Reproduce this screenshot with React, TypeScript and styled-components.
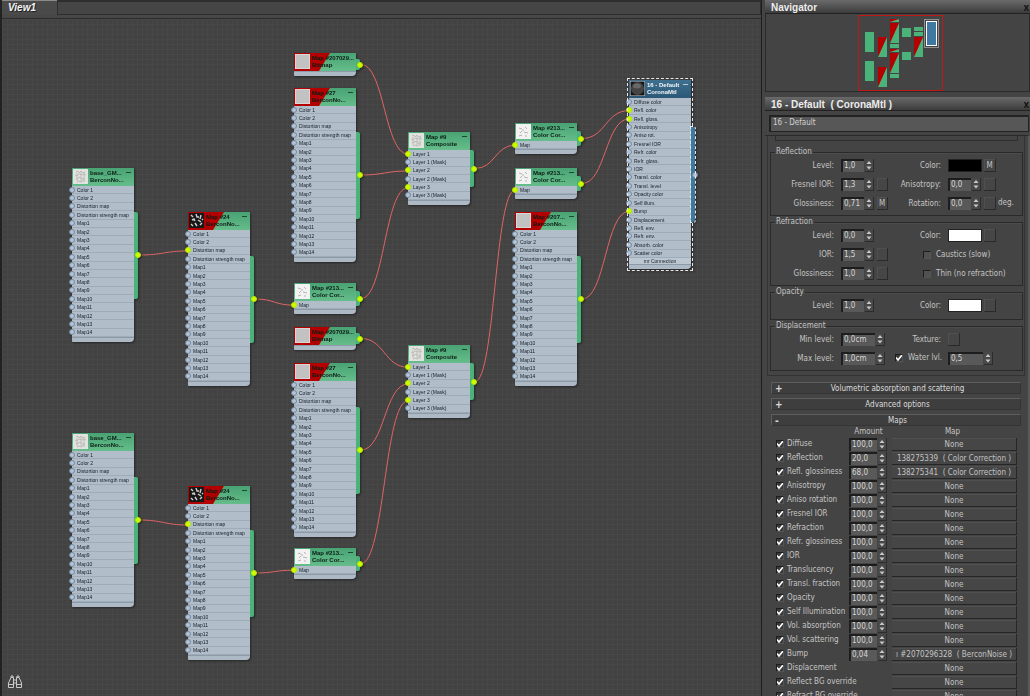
import React from "react";
import styled, { createGlobalStyle, css } from "styled-components";

const GlobalStyle = createGlobalStyle`
  * { box-sizing: border-box; }
  html, body { margin: 0; background: #444; }
  body { font-family: "DejaVu Sans Condensed", "DejaVu Sans", sans-serif; font-size: 8px; line-height: 12px; color: #c4c4c4; }
  button, input { font: inherit; color: inherit; margin: 0; }
  ul { list-style: none; margin: 0; padding: 0; }
`;

const ROW_HEIGHT = 8.4;
const NODE_WIDTH = 62;
const HEADER_HEIGHT = 18;
const FOOTER_HEIGHT = 5;

type Look = "plain" | "scratch" | "noise" | "blob" | "sphere";

interface GraphNode {
  id: string;
  x: number;
  y: number;
  title: string;
  kind: string;
  look: Look;
  flagged?: boolean;
  selected?: boolean;
  fixed?: boolean;
  slots: string[];
  used?: number[];
}

const berconSlots = [
  "Color 1", "Color 2", "Distortion map", "Distortion strength map",
  ...Array.from({ length: 14 }, (_, i) => `Map${i + 1}`),
];
const layerSlots = ["Layer 1", "Layer 1 (Mask)", "Layer 2", "Layer 2 (Mask)", "Layer 3", "Layer 3 (Mask)"];
const coronaSlots = [
  "Diffuse color", "Refl. color", "Refl. gloss.", "Anisotropy", "Aniso rot.", "Fresnel IOR", "Refr. color",
  "Refr. gloss.", "IOR", "Transl. color", "Transl. level", "Opacity color", "Self illum.", "Bump",
  "Displacement", "Refl. env.", "Refr. env.", "Absorb. color", "Scatter color",
];

const nodes: GraphNode[] = [
  { id: "base1", x: 72, y: 168, title: "base_GM...", kind: "BerconNo...", look: "noise", slots: berconSlots },
  { id: "base2", x: 72, y: 433, title: "base_GM...", kind: "BerconNo...", look: "noise", slots: berconSlots },
  { id: "m24a", x: 188, y: 212, title: "Map #24", kind: "BerconNo...", look: "blob", flagged: true, slots: berconSlots, used: [2] },
  { id: "m24b", x: 188, y: 486, title: "Map #24", kind: "BerconNo...", look: "blob", flagged: true, slots: berconSlots, used: [2] },
  { id: "bmp1", x: 294, y: 53, title: "Map #207029...", kind: "Bitmap", look: "plain", flagged: true, fixed: true, slots: [] },
  { id: "m27a", x: 294, y: 88, title: "Map #27", kind: "BerconNo...", look: "plain", flagged: true, slots: berconSlots },
  { id: "cc1", x: 294, y: 283, title: "Map #213...", kind: "Color Cor...", look: "scratch", slots: ["Map"], used: [0] },
  { id: "bmp2", x: 294, y: 327, title: "Map #207029...", kind: "Bitmap", look: "plain", flagged: true, fixed: true, slots: [] },
  { id: "m27b", x: 294, y: 363, title: "Map #27", kind: "BerconNo...", look: "plain", flagged: true, slots: berconSlots },
  { id: "cc2", x: 294, y: 548, title: "Map #213...", kind: "Color Cor...", look: "scratch", slots: ["Map"], used: [0] },
  { id: "comp1", x: 408, y: 132, title: "Map #9", kind: "Composite", look: "noise", slots: layerSlots, used: [0, 2, 4] },
  { id: "comp2", x: 408, y: 345, title: "Map #9", kind: "Composite", look: "noise", slots: layerSlots, used: [0, 2, 4] },
  { id: "cc3", x: 515, y: 123, title: "Map #213...", kind: "Color Cor...", look: "scratch", slots: ["Map"], used: [0] },
  { id: "cc4", x: 515, y: 168, title: "Map #213...", kind: "Color Cor...", look: "scratch", slots: ["Map"], used: [0] },
  { id: "m207", x: 515, y: 212, title: "Map #207...", kind: "BerconNo...", look: "plain", flagged: true, slots: berconSlots },
  { id: "mtl", x: 629, y: 80, title: "16 - Default", kind: "CoronaMtl", look: "sphere", selected: true, slots: coronaSlots, used: [1, 2, 13] },
];

const links: [string, string, number][] = [
  ["base1", "m24a", 2], ["base2", "m24b", 2], ["m24a", "cc1", 0], ["m24b", "cc2", 0],
  ["bmp1", "comp1", 0], ["m27a", "comp1", 2], ["cc1", "comp1", 4],
  ["bmp2", "comp2", 0], ["m27b", "comp2", 2], ["cc2", "comp2", 4],
  ["comp1", "cc3", 0], ["comp2", "cc4", 0],
  ["cc3", "mtl", 1], ["cc4", "mtl", 2], ["m207", "mtl", 13],
];

const slotsHeight = (n: GraphNode) => Math.round(n.slots.length * ROW_HEIGHT);
const nodeHeight = (n: GraphNode) =>
  HEADER_HEIGHT + slotsHeight(n) + FOOTER_HEIGHT + (n.selected ? 6 : 0);

function wirePath([fromId, toId, slot]: [string, string, number]) {
  const from = nodes.find((n) => n.id === fromId)!;
  const to = nodes.find((n) => n.id === toId)!;
  const x1 = from.x + NODE_WIDTH + 5;
  const y1 = from.y + nodeHeight(from) / 2;
  const x2 = to.x;
  const y2 = to.y + HEADER_HEIGHT + (slot + 0.5) * ROW_HEIGHT;
  const bend = Math.max(12, (x2 - x1) / 2);
  return `M${x1} ${y1}C${x1 + bend} ${y1} ${x2 - bend} ${y2} ${x2} ${y2}`;
}

/* ---------- page frame ---------- */

const Workspace = styled.div`
  display: flex;
  height: 100vh;
  overflow: hidden;
  background: #2a2a2a;
`;

const GraphPane = styled.main`
  flex: 1;
  min-width: 0;
  display: flex;
  flex-direction: column;
  border-left: 2px solid #222;
  background: #444;
`;

const TabStrip = styled.nav`
  display: flex;
  height: 19px;
  padding-bottom: 3px;
  border-bottom: 1px solid #2c2c2c;
  background: #474747;
`;

const ViewTab = styled.button`
  width: 55px;
  padding: 0 0 0 6px;
  border: 0;
  border-top: 1px solid #8a8a8a;
  background: #4a4a4a;
  color: #f2f2f2;
  font: italic bold 10px/12px "Liberation Sans", Arial, sans-serif;
  text-align: left;
  text-shadow: 1px 1px 0 #222;
`;

const TabRest = styled.div`
  flex: 1;
  border: 1px solid #2e2e2e;
  border-top-width: 2px;
  background: #454545;
`;

const Canvas = styled.div`
  position: relative;
  flex: 1;
  overflow: hidden;
  background-color: #424242;
  background-image:
    linear-gradient(#474747 1px, transparent 1px),
    linear-gradient(90deg, #474747 1px, transparent 1px);
  background-size: 5px 5px;
`;

const Scene = styled.div`
  position: absolute;
  left: -2px;
  top: -19px;
`;

const Wires = styled.svg`
  position: absolute;
  left: 0;
  top: 0;
  width: 762px;
  height: 696px;
  fill: none;
  stroke: #e06464;
`;

const FindButton = styled.button`
  position: absolute;
  left: 5px;
  bottom: 6px;
  width: 16px;
  height: 16px;
  padding: 0;
  border: 0;
  background: none;
  svg { display: block; }
`;

/* ---------- graph nodes ---------- */

const NodeBox = styled.article<{ $x: number; $y: number; $selected?: boolean }>`
  position: absolute;
  left: ${(p) => p.$x}px;
  top: ${(p) => p.$y}px;
  width: ${NODE_WIDTH}px;
  color: #16202a;
  font-family: "Liberation Sans", Arial, sans-serif;
  filter: drop-shadow(1px 1px 1px #262626);
  ${(p) => p.$selected && css`outline: 1px dashed #e8e8e8; outline-offset: 1px;`}
`;

const NodeHeader = styled.header<{ $flagged?: boolean; $selected?: boolean }>`
  display: flex;
  position: relative;
  isolation: isolate;
  height: ${HEADER_HEIGHT}px;
  padding: 1px;
  background: ${(p) =>
    p.$selected ? "linear-gradient(#3f7090, #2a5876)" : "linear-gradient(#48a273, #66bd8b)"};
  color: ${(p) => (p.$selected ? "#f0f4f8" : "#0c1c14")};
  ${(p) => p.$flagged && css`
    &::before {
      content: "";
      position: absolute;
      z-index: -1;
      inset: 0;
      background: #b30000;
      clip-path: polygon(0 0, 36px 0, 25px 100%, 0 100%);
    }
  `}
`;

const Thumb = styled.svg`
  flex: none;
  width: 15px;
  height: 15px;
`;

const NodeTitle = styled.h3`
  margin: 0;
  padding: 1px 0 0 2px;
  font-size: 6px;
  line-height: 7px;
  white-space: nowrap;
`;

const CollapseMark = styled.button`
  position: absolute;
  right: 3px;
  top: 4px;
  width: 5px;
  height: 1px;
  padding: 0;
  border: 0;
  background: currentColor;
  opacity: 0.7;
`;

const SlotList = styled.ul<{ $height: number }>`
  display: grid;
  grid-auto-rows: 1fr;
  height: ${(p) => p.$height}px;
  background: #b1bdc9;
`;

const Slot = styled.li`
  display: flex;
  align-items: center;
  border-bottom: 1px solid #9eabb8;
  font-size: 5px;
  line-height: 6px;
  white-space: nowrap;
`;

const Socket = styled.span<{ $used?: boolean }>`
  flex: none;
  width: 6px;
  height: 6px;
  margin: 0 2px 0 -3px;
  border-radius: 3px;
  border: 1px solid ${(p) => (p.$used ? "#b4e600" : "#74879c")};
  background: ${(p) => (p.$used ? "#ccff00" : "#b4c4d8")};
`;

const NodeFooter = styled.div`
  height: ${FOOTER_HEIGHT}px;
  border-top: 1px solid #8d9aa7;
  border-radius: 0 0 4px 1px;
  background: #aeb9c6;
`;

const ExtraSection = styled.div`
  height: 6px;
  background: #bcc7d2;
  font-size: 5px;
  line-height: 6px;
  text-align: center;
`;

const OutputTab = styled.div<{ $selected?: boolean }>`
  position: absolute;
  left: 100%;
  top: 25%;
  display: flex;
  align-items: center;
  width: 4px;
  height: 50%;
  border-radius: 0 2px 2px 0;
  background: ${(p) => (p.$selected ? "#3c7ba0" : "#4bb27a")};
  ${(p) => p.$selected && css`outline: 1px dashed #e8e8e8;`}
`;

const OutputDot = styled(Socket)`
  margin: 0 0 0 1px;
`;

const thumbArt: Record<Look, React.ReactNode> = {
  plain: <rect width="15" height="15" fill="#c2c2c2" stroke="#f0e8e8" />,
  noise: (
    <>
      <rect width="15" height="15" fill="#e2e2e0" />
      <path d="M3 3l2 -1 1 2 2-2 2 2 2-1M2 6l2 1 2-2 3 1 2-1 2 1M3 9l2 1 1-2 3 1 1 2 2-2M4 13l2-1 2 1 2-1 2 0M4 4v8M8 3v10M11 3v9" stroke="#bcbcb8" fill="none" />
    </>
  ),
  scratch: (
    <>
      <rect width="15" height="15" fill="#f2f2f2" />
      <path d="M3 4l3 1M9 3l2 2M4 9l2-2M8 8l4 1M3 12l3-1M9 12l2 0M7 5l0 2" stroke="#b4b4b4" fill="none" />
    </>
  ),
  blob: (
    <>
      <rect width="15" height="15" fill="#181818" />
      <path d="M2 2l2 2M7 1l1 3 2 0M12 2l-1 4M3 7l2-1 1 2M9 7l3 2M2 11l2 2M6 10l2 3M11 12l2-2M13 6l1 1" stroke="#cfcfcf" strokeWidth="1.4" fill="none" />
    </>
  ),
  sphere: (
    <>
      <rect width="15" height="15" fill="#161616" stroke="#d0d0d0" />
      <circle cx="7.5" cy="7.5" r="6.5" fill="#444" />
      <ellipse cx="7" cy="5" rx="4" ry="2.5" fill="#686868" />
    </>
  ),
};

function NodeCard({ node }: { node: GraphNode }) {
  return (
    <NodeBox $x={node.x} $y={node.y} $selected={node.selected}>
      <NodeHeader $flagged={node.flagged} $selected={node.selected}>
        <Thumb viewBox="0 0 15 15" aria-hidden="true">{thumbArt[node.look]}</Thumb>
        <NodeTitle>{node.title}<br />{node.kind}</NodeTitle>
        {!node.fixed && <CollapseMark aria-label={`Collapse ${node.title}`} />}
      </NodeHeader>
      <SlotList $height={slotsHeight(node)}>
        {node.slots.map((slot, i) => (
          <Slot key={slot + i}><Socket $used={node.used?.includes(i)} />{slot}</Slot>
        ))}
      </SlotList>
      {node.selected && <ExtraSection>mr Connection</ExtraSection>}
      <NodeFooter />
      <OutputTab $selected={node.selected}><OutputDot $used={!node.selected} /></OutputTab>
    </NodeBox>
  );
}

/* ---------- side panel ---------- */

const SidePane = styled.aside`
  display: flex;
  flex: none;
  flex-direction: column;
  width: 269px;
  padding-left: 3px;
  background: #444;
  border-left: 1px solid #1e1e1e;
`;

const TitleBar = styled.header`
  display: flex;
  flex: none;
  justify-content: space-between;
  height: 14px;
  padding: 0 1px 0 6px;
  border-bottom: 1px solid #222;
  background: linear-gradient(#6a6a6a, #3c3c3c);
  color: #ececec;
  font: bold 10px/15px "Liberation Sans", Arial, sans-serif;
  white-space: pre;
`;

const PaneTitle = styled.h2`
  margin: 0;
  font: inherit;
`;

const CloseButton = styled.button`
  padding: 0;
  border: 0;
  background: none;
  color: #111;
`;

const NavigatorBody = styled.div`
  flex: none;
  height: 78px;
  margin-bottom: 5px;
  border: 1px solid #2a2a2a;
  border-top: 0;
  svg { display: block; margin-left: 92px; }
`;

const NameField = styled.input`
  flex: none;
  height: 17px;
  margin: 4px 1px 3px 4px;
  padding: 0 3px 3px 2px;
  border: 1px solid #222;
  border-width: 2px 1px 1px 2px;
  background: #575757;
  color: #d2d2d2;
`;

const Scroller = styled.div`
  flex: 1;
  min-height: 0;
  overflow: hidden;
  padding: 0 3px 0 2px;
  border-top: 1px solid #2a2a2a;
  border-right: 2px solid #5a5a5a;
`;

const RolloutBody = styled.div`
  padding: 0 1px 4px 2px;
  border: 1px solid #333;
  border-top: 0;
`;

const PreviousGroup = styled.div`
  height: 5px;
  margin: 0 5px 5px;
  border: 1px solid #2e2e2e;
  border-top: 0;
`;

const Group = styled.fieldset<{ $bottom: number }>`
  display: grid;
  grid-template-columns: 63px 47px 46px 1fr;
  column-gap: 7px;
  row-gap: 5px;
  margin: 0;
  padding: 0 0 ${(p) => p.$bottom}px;
  border: 1px solid #2a2a2a;
  box-shadow: inset 0 1px 0 #4c4c4c;
`;

const GroupTitle = styled.legend`
  margin-left: 4px;
  padding: 0 1px;
`;

const Caption = styled.label`
  padding-top: 2px;
  text-align: right;
  white-space: nowrap;
`;

const Controls = styled.div`
  display: flex;
  align-items: center;
  gap: 2px;
  height: 14px;
`;

const NumberInput = styled.input<{ $width: number }>`
  width: ${(p) => p.$width}px;
  height: 13px;
  padding: 0 0 1px 1px;
  border: 1px solid #1d1d1d;
  border-width: 2px 0 0 2px;
  background: #595959;
  color: #d6d6d6;
`;

const SpinBox = styled.span`
  display: flex;
  flex: none;
  gap: 1px;
`;

const SpinButton = styled.button`
  display: flex;
  width: 9px;
  height: 13px;
  padding: 0;
  border: 1px solid #2c2c2c;
  border-width: 0 1px 1px 0;
  background: #484848;
`;

const SlotButton = styled.button<{ $after?: boolean }>`
  width: 12px;
  height: 13px;
  margin-left: ${(p) => (p.$after ? 1 : 0)}px;
  padding: 0;
  border: 1px solid #2a2a2a;
  border-width: 0 1px 1px 0;
  background: #464646;
  box-shadow: inset 1px 1px 0 #505050;
  line-height: 13px;
`;

const Swatch = styled.button<{ $color: string }>`
  width: 34px;
  height: 13px;
  padding: 0;
  border: 1px solid #222;
  background: ${(p) => p.$color};
`;

const Tick = styled.input`
  flex: none;
  appearance: none;
  width: 8px;
  height: 8px;
  border: 1px solid #1d1d1d;
  border-right-color: #555;
  border-bottom-color: #555;
  background: #505050;
  &:checked {
    background: #3a3a3a url("data:image/svg+xml,%3Csvg xmlns='http://www.w3.org/2000/svg' viewBox='0 0 8 8'%3E%3Cpath d='M1 3.5L3 6L7 1' fill='none' stroke='%23fff' stroke-width='1.6'/%3E%3C/svg%3E") center / 8px 8px no-repeat;
  }
`;

const TickLabel = styled.label<{ $indent?: boolean; $wide?: boolean }>`
  display: flex;
  align-items: center;
  gap: 5px;
  white-space: nowrap;
  ${(p) => p.$wide && css`grid-column: 3 / 5;`}
  ${(p) => p.$indent && css`padding: 1px 0 0 28px;`}
`;

const RolloutHeader = styled.button<{ $first?: boolean }>`
  display: grid;
  grid-template-columns: 10px 1fr 10px;
  align-items: center;
  width: 250px;
  height: 12px;
  margin: ${(p) => (p.$first ? 6 : 4)}px 0 0 4px;
  padding: 0 0 0 3px;
  border: 1px solid #5e5e5e;
  border-right-color: #353535;
  border-bottom-color: #353535;
  background: #3e3e3e;
  color: #dcdcdc;
  line-height: 12px;
`;

const Sign = styled.b`
  text-align: left;
  font-size: 10px;
  line-height: 8px;
`;

const MapTable = styled.table`
  width: 241px;
  margin-left: 9px;
  border-collapse: collapse;
  table-layout: fixed;
  th { height: 11px; padding: 0 4px 0 0; font-weight: normal; line-height: 11px; }
  td { height: 14px; padding: 0; white-space: nowrap; }
  label { gap: 3px; }
`;

const MapButton = styled.button`
  display: flex;
  justify-content: center;
  width: 125px;
  height: 13px;
  padding: 0;
  border: 1px solid #262626;
  border-width: 0 1px 1px 0;
  background: #464646;
  box-shadow: inset 0 1px 0 #505050;
  line-height: 13px;
  white-space: pre;
  overflow: hidden;
`;

function Spin({ id, label, value, width }: { id: string; label?: string; value: string; width: number }) {
  return (
    <SpinBox>
      <NumberInput id={id} aria-label={label} defaultValue={value} $width={width} />
      <SpinButton aria-label="Adjust value">
        <svg width="8" height="12" viewBox="0 0 8 12" fill="#c8c8c8" aria-hidden="true">
          <path d="M4 2L6.5 5H1.500zM4 10.500L6.500 7.500H1.500z" />
        </svg>
      </SpinButton>
    </SpinBox>
  );
}

const minimap: { x: number; y: number; w: number; h: number; red?: boolean }[] = [
  { x: 7, y: 17, w: 9, h: 20 }, { x: 7, y: 46, w: 9, h: 20 },
  { x: 20, y: 22, w: 9, h: 20, red: true }, { x: 20, y: 52, w: 9, h: 20, red: true },
  { x: 32, y: 4, w: 9, h: 3, red: true }, { x: 32, y: 8, w: 9, h: 20, red: true },
  { x: 32, y: 29, w: 9, h: 4 }, { x: 32, y: 34, w: 9, h: 3, red: true },
  { x: 32, y: 38, w: 9, h: 20, red: true }, { x: 32, y: 59, w: 9, h: 4 },
  { x: 44, y: 13, w: 9, h: 9 }, { x: 44, y: 37, w: 9, h: 8 },
  { x: 56, y: 12, w: 9, h: 4 }, { x: 56, y: 17, w: 9, h: 4 }, { x: 56, y: 22, w: 9, h: 20, red: true },
];

const maps: [string, string | null, string][] = [
  ["Diffuse", "100,0", "None"],
  ["Reflection", "20,0", "138275339  ( Color Correction )"],
  ["Refl. glossiness", "68,0", "138275341  ( Color Correction )"],
  ["Anisotropy", "100,0", "None"],
  ["Aniso rotation", "100,0", "None"],
  ["Fresnel IOR", "100,0", "None"],
  ["Refraction", "100,0", "None"],
  ["Refr. glossiness", "100,0", "None"],
  ["IOR", "100,0", "None"],
  ["Translucency", "100,0", "None"],
  ["Transl. fraction", "100,0", "None"],
  ["Opacity", "100,0", "None"],
  ["Self Illumination", "100,0", "None"],
  ["Vol. absorption", "100,0", "None"],
  ["Vol. scattering", "100,0", "None"],
  ["Bump", "0,04", "ı #2070296328  ( BerconNoise )"],
  ["Displacement", null, "None"],
  ["Reflect BG override", null, "None"],
  ["Refract BG override", null, "None"],
];

export default function App() {
  return (
    <Workspace>
      <GlobalStyle />
      <GraphPane>
        <TabStrip><ViewTab>View1</ViewTab><TabRest /></TabStrip>
        <Canvas>
          <Scene>
            <Wires aria-hidden="true">
              {links.map((l) => <path key={l.join()} d={wirePath(l)} />)}
            </Wires>
            {nodes.map((n) => <NodeCard key={n.id} node={n} />)}
          </Scene>
          <FindButton aria-label="Find">
            <svg width="16" height="16" viewBox="0 0 16 16" fill="none" stroke="#c9c9c9">
              <path d="M1.500 13.500V9L4 3.500H6.500V13.500ZM9.500 13.500V3.500H12L14.500 9V13.500ZM6.500 6H9.500M6.500 9H9.500M1.500 10.500H6.500M9.500 10.500H14.500M4 3.500V2H6V3.500M10 3.500V2H12V3.500" />
            </svg>
          </FindButton>
        </Canvas>
      </GraphPane>

      <SidePane>
        <TitleBar><PaneTitle>Navigator</PaneTitle><CloseButton aria-label="Close navigator">x</CloseButton></TitleBar>
        <NavigatorBody>
          <svg width="85" height="77" viewBox="0 -1 85 77" role="img" aria-label="Graph overview">
            <rect x="0.500" y="0.500" width="84" height="75" fill="none" stroke="#c01818" />
            {minimap.map((m, i) => (
              <g key={i}>
                <rect x={m.x} y={m.y} width={m.w} height={m.h} fill="#4bb27a" />
                {m.red && <path d={`M${m.x} ${m.y}h${m.w}L${m.x} ${m.y + m.h}z`} fill="#b30000" />}
              </g>
            ))}
            <rect x="68.500" y="6.500" width="10" height="24" fill="#3f78a0" stroke="#fff" />
            <rect x="66.500" y="4.500" width="14" height="28" fill="none" stroke="#ddd" strokeDasharray="1 1" />
          </svg>
        </NavigatorBody>

        <TitleBar><PaneTitle>{"16 - Default  ( CoronaMtl )"}</PaneTitle><CloseButton aria-label="Close material">x</CloseButton></TitleBar>
        <NameField aria-label="Material name" defaultValue="16 - Default" />

        <Scroller>
          <RolloutBody>
            <PreviousGroup />
            <Group $bottom={5}>
              <GroupTitle>Reflection</GroupTitle>
              <Caption htmlFor="rl">Level:</Caption>
              <Controls><Spin id="rl" value="1,0" width={23} /></Controls>
              <Caption htmlFor="rc">Color:</Caption>
              <Controls><Swatch id="rc" $color="#000" /><SlotButton>M</SlotButton></Controls>
              <Caption htmlFor="rf">Fresnel IOR:</Caption>
              <Controls><Spin id="rf" value="1,3" width={23} /><SlotButton $after aria-label="Fresnel map" /></Controls>
              <Caption htmlFor="ra">Anisotropy:</Caption>
              <Controls><Spin id="ra" value="0,0" width={23} /><SlotButton $after aria-label="Anisotropy map" /></Controls>
              <Caption htmlFor="rg">Glossiness:</Caption>
              <Controls><Spin id="rg" value="0,71" width={23} /><SlotButton $after>M</SlotButton></Controls>
              <Caption htmlFor="rr">Rotation:</Caption>
              <Controls><Spin id="rr" value="0,0" width={23} /><SlotButton $after aria-label="Rotation map" /><span>deg.</span></Controls>
            </Group>
            <Group $bottom={5}>
              <GroupTitle>Refraction</GroupTitle>
              <Caption htmlFor="fl">Level:</Caption>
              <Controls><Spin id="fl" value="0,0" width={23} /></Controls>
              <Caption htmlFor="fc">Color:</Caption>
              <Controls><Swatch id="fc" $color="#fff" /><SlotButton aria-label="Refraction map" /></Controls>
              <Caption htmlFor="fi">IOR:</Caption>
              <Controls><Spin id="fi" value="1,5" width={23} /><SlotButton $after aria-label="IOR map" /></Controls>
              <TickLabel $wide $indent><Tick type="checkbox" />Caustics (slow)</TickLabel>
              <Caption htmlFor="fg">Glossiness:</Caption>
              <Controls><Spin id="fg" value="1,0" width={23} /><SlotButton $after aria-label="Glossiness map" /></Controls>
              <TickLabel $wide $indent><Tick type="checkbox" />Thin (no refraction)</TickLabel>
            </Group>
            <Group $bottom={7}>
              <GroupTitle>Opacity</GroupTitle>
              <Caption htmlFor="ol">Level:</Caption>
              <Controls><Spin id="ol" value="1,0" width={23} /></Controls>
              <Caption htmlFor="oc">Color:</Caption>
              <Controls><Swatch id="oc" $color="#fff" /><SlotButton aria-label="Opacity map" /></Controls>
            </Group>
            <Group $bottom={5}>
              <GroupTitle>Displacement</GroupTitle>
              <Caption htmlFor="dmin">Min level:</Caption>
              <Controls><Spin id="dmin" value="0,0cm" width={34} /></Controls>
              <Caption htmlFor="dt">Texture:</Caption>
              <Controls><SlotButton id="dt" /></Controls>
              <Caption htmlFor="dmax">Max level:</Caption>
              <Controls><Spin id="dmax" value="1,0cm" width={34} /></Controls>
              <TickLabel><Tick type="checkbox" defaultChecked />Water lvl.</TickLabel>
              <Controls><Spin id="dw" label="Water level" value="0,5" width={35} /></Controls>
            </Group>
          </RolloutBody>

          <RolloutHeader $first><Sign>+</Sign>Volumetric absorption and scattering</RolloutHeader>
          <RolloutHeader><Sign>+</Sign>Advanced options</RolloutHeader>
          <RolloutHeader><Sign>-</Sign>Maps</RolloutHeader>
          <MapTable>
            <colgroup><col style={{ width: 73 }} /><col style={{ width: 43 }} /><col /></colgroup>
            <thead><tr><th /><th scope="col">Amount</th><th scope="col">Map</th></tr></thead>
            <tbody>
              {maps.map(([name, amount, map], i) => (
                <tr key={name}>
                  <td><TickLabel><Tick type="checkbox" defaultChecked />{name}</TickLabel></td>
                  <td>{amount && <Spin id={`amount-${i}`} label={`${name} amount`} value={amount} width={28} />}</td>
                  <td><MapButton>{map}</MapButton></td>
                </tr>
              ))}
            </tbody>
          </MapTable>
        </Scroller>
      </SidePane>
    </Workspace>
  );
}
